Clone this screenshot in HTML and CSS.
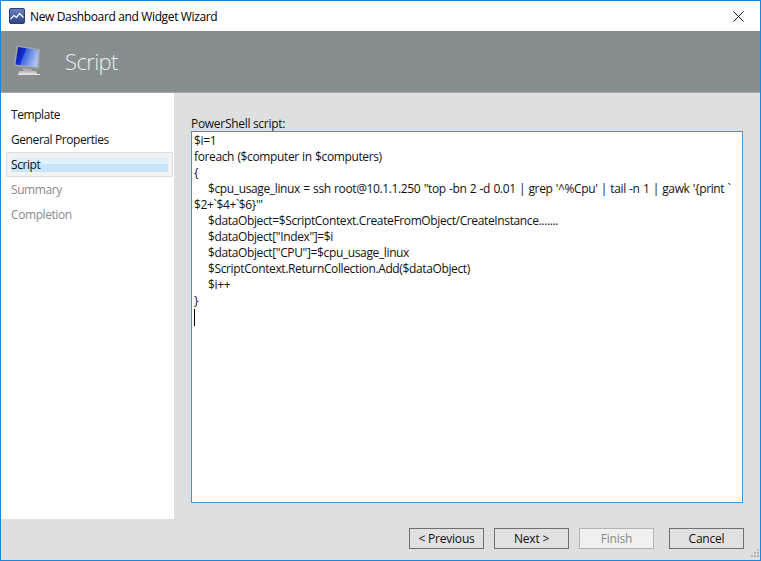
FILE: index.html
```html
<!DOCTYPE html>
<html lang="en">
<head>
<meta charset="utf-8">
<title>New Dashboard and Widget Wizard</title>
<link rel="stylesheet" href="styles.css">
</head>
<body>
<div class="window">
  <div class="titlebar">
    <svg class="app-icon" width="16" height="16" viewBox="0 0 16 16">
      <defs><linearGradient id="ai" x1="0" y1="0" x2="0" y2="1"><stop offset="0" stop-color="#6d84c0"/><stop offset="1" stop-color="#2c4288"/></linearGradient></defs>
      <rect x="0.5" y="0.5" width="15" height="15" rx="1.5" fill="url(#ai)" stroke="#2a3c7c"/>
      <path d="M1.5 11 L5 7.5 L7.5 9.5 L10.5 5.5 L14.5 9.5" fill="none" stroke="#fff" stroke-width="1.2"/>
    </svg>
    <span class="title">New Dashboard and Widget Wizard</span>
    <svg class="close" width="11" height="11" viewBox="0 0 11 11"><path d="M0.5 0.5 L10.5 10.5 M10.5 0.5 L0.5 10.5" stroke="#111" stroke-width="1" fill="none"/></svg>
  </div>
  <div class="banner">
    <svg class="monitor" width="30" height="32" viewBox="0 0 30 32">
      <defs>
        <linearGradient id="sc" x1="0" y1="0" x2="1" y2="0.35"><stop offset="0" stop-color="#0a1a9c"/><stop offset="0.42" stop-color="#0f2fd0"/><stop offset="0.47" stop-color="#3f68e0"/><stop offset="1" stop-color="#a9bfee"/></linearGradient>
        <linearGradient id="st" x1="0" y1="0" x2="0" y2="1"><stop offset="0" stop-color="#b5b5b5"/><stop offset="1" stop-color="#ececec"/></linearGradient>
      </defs>
      <path d="M3.5 0.5 L27 4 L26 23.5 L1 21 Z" fill="#a2a4a5"/>
      <path d="M5 2 L25.5 5 L24.5 22 L2.5 19.5 Z" fill="url(#sc)"/>
      <path d="M10 23 L19 24 L19 26 L10 26 Z" fill="#a9abac"/>
      <path d="M6 26 L23 26 L24 29 L27 29 L27 30 L5 30 Z" fill="url(#st)"/>
    </svg>
    <span class="banner-title">Script</span>
  </div>
  <div class="body">
    <nav class="nav">
      <div class="nav-item">Template</div>
      <div class="nav-item">General Properties</div>
      <div class="nav-item active"><span class="active-fill">Script</span></div>
      <div class="nav-item disabled">Summary</div>
      <div class="nav-item disabled">Completion</div>
    </nav>
    <main class="content">
      <label class="field-label">PowerShell script:</label>
      <div class="editor">
        <div class="ln">$i=1</div>
        <div class="ln">foreach ($computer in $computers)</div>
        <div class="ln">{</div>
        <div class="ln ind">$cpu_usage_linux = ssh root@10.1.1.250 "top -bn 2 -d 0.01 | grep '^%Cpu' | tail -n 1 | gawk '{print `</div>
        <div class="ln">$2+`$4+`$6}'"</div>
        <div class="ln ind">$dataObject=$ScriptContext.CreateFromObject/CreateInstance.......</div>
        <div class="ln ind">$dataObject["Index"]=$i</div>
        <div class="ln ind">$dataObject["CPU"]=$cpu_usage_linux</div>
        <div class="ln ind">$ScriptContext.ReturnCollection.Add($dataObject)</div>
        <div class="ln ind">$i++</div>
        <div class="ln">}</div>
        <div class="caret-line"><span class="caret"></span></div>
      </div>
    </main>
  </div>
  <footer class="footer">
    <button class="btn">&lt; Previous</button>
    <button class="btn">Next &gt;</button>
    <button class="btn off" disabled>Finish</button>
    <button class="btn cancel">Cancel</button>
    <svg class="grip" width="11" height="11" viewBox="0 0 11 11" fill="#b4b4b4">
      <rect x="8" y="0" width="2" height="2"/>
      <rect x="5" y="3" width="2" height="2"/><rect x="8" y="3" width="2" height="2"/>
      <rect x="2" y="6" width="2" height="2"/><rect x="5" y="6" width="2" height="2"/><rect x="8" y="6" width="2" height="2"/>
    </svg>
  </footer>
</div>
</body>
</html>
```

FILE: styles.css
```css
* { box-sizing: border-box; }
html, body { margin: 0; padding: 0; }
body {
  font-family: "Open Sans", "Noto Sans", "Liberation Sans", sans-serif;
  font-size: 12px;
  color: #111;
}
.window {
  width: 761px;
  height: 561px;
  border: 1px solid #1c87d9;
  display: flex;
  flex-direction: column;
  background: #dfdfdf;
  overflow: hidden;
}
.titlebar {
  height: 30px;
  flex: none;
  background: #fff;
  display: flex;
  align-items: center;
  padding: 0 16px 0 8px;
}
.app-icon { margin-right: 5px; }
.title { flex: 1; font-size: 12px; letter-spacing: -0.36px; color: #000; }
.banner {
  height: 62px;
  flex: none;
  background: #888d90;
  border-bottom: 1px solid #a6a9ab;
  display: flex;
  align-items: center;
  padding: 0 0 2px 12px;
}
.monitor { margin-right: 22px; }
.banner-title { font-size: 22px; font-weight: 300; color: #e8eef2; letter-spacing: -0.6px; }
.body { flex: 1; display: flex; min-height: 0; }
.nav {
  width: 173px;
  flex: none;
  background: #fff;
  padding: 9px 0 0 5px;
  display: flex;
  flex-direction: column;
}
.nav-item {
  height: 25px;
  line-height: 25px;
  padding-left: 5px;
  letter-spacing: -0.42px;
  margin-right: 1px;
}
.nav-item.disabled { color: #8a8a8a; }
.nav-item.active {
  background: #f2f2f2;
  border: 1px solid #dcdcdc;
  padding: 4px;
  line-height: 16px;
}
.active-fill {
  display: block;
  height: 15px;
  line-height: 15px;
  background: linear-gradient(#e1f1fb 50%, #c5e5f9 50%);
}
.content {
  flex: 1;
  padding: 23px 17px 16px 17px;
  display: flex;
  flex-direction: column;
}
.field-label { height: 15px; line-height: 15px; letter-spacing: -0.3px; color: #111; }
.editor {
  flex: 1;
  border: 1px solid #3f92dc;
  background: #fff;
  padding: 1px 2px;
  line-height: 16px;
  letter-spacing: -0.37px;
  word-spacing: 0.55px;
  overflow: hidden;
}
.ln { white-space: pre; height: 16px; }
.ind { padding-left: 14px; }
.caret-line { height: 16px; }
.caret { display: block; width: 1px; height: 17px; background: #000; }
.footer {
  height: 41px;
  flex: none;
  display: flex;
  align-items: flex-start;
  padding: 9px 0 0 408px;
  position: relative;
}
.btn {
  width: 75px;
  height: 21px;
  padding: 0;
  font: inherit;
  letter-spacing: -0.2px;
  background: #e1e1e1;
  border: 1px solid #707070;
  color: #111;
  margin-right: 10px;
}
.btn.off { background: #f0f0f0; border-color: #b4b4b4; color: #8a8a8a; margin-right: 15px; }
.btn.cancel { margin-right: 0; }
.grip { position: absolute; right: 0; bottom: 0; }
```
